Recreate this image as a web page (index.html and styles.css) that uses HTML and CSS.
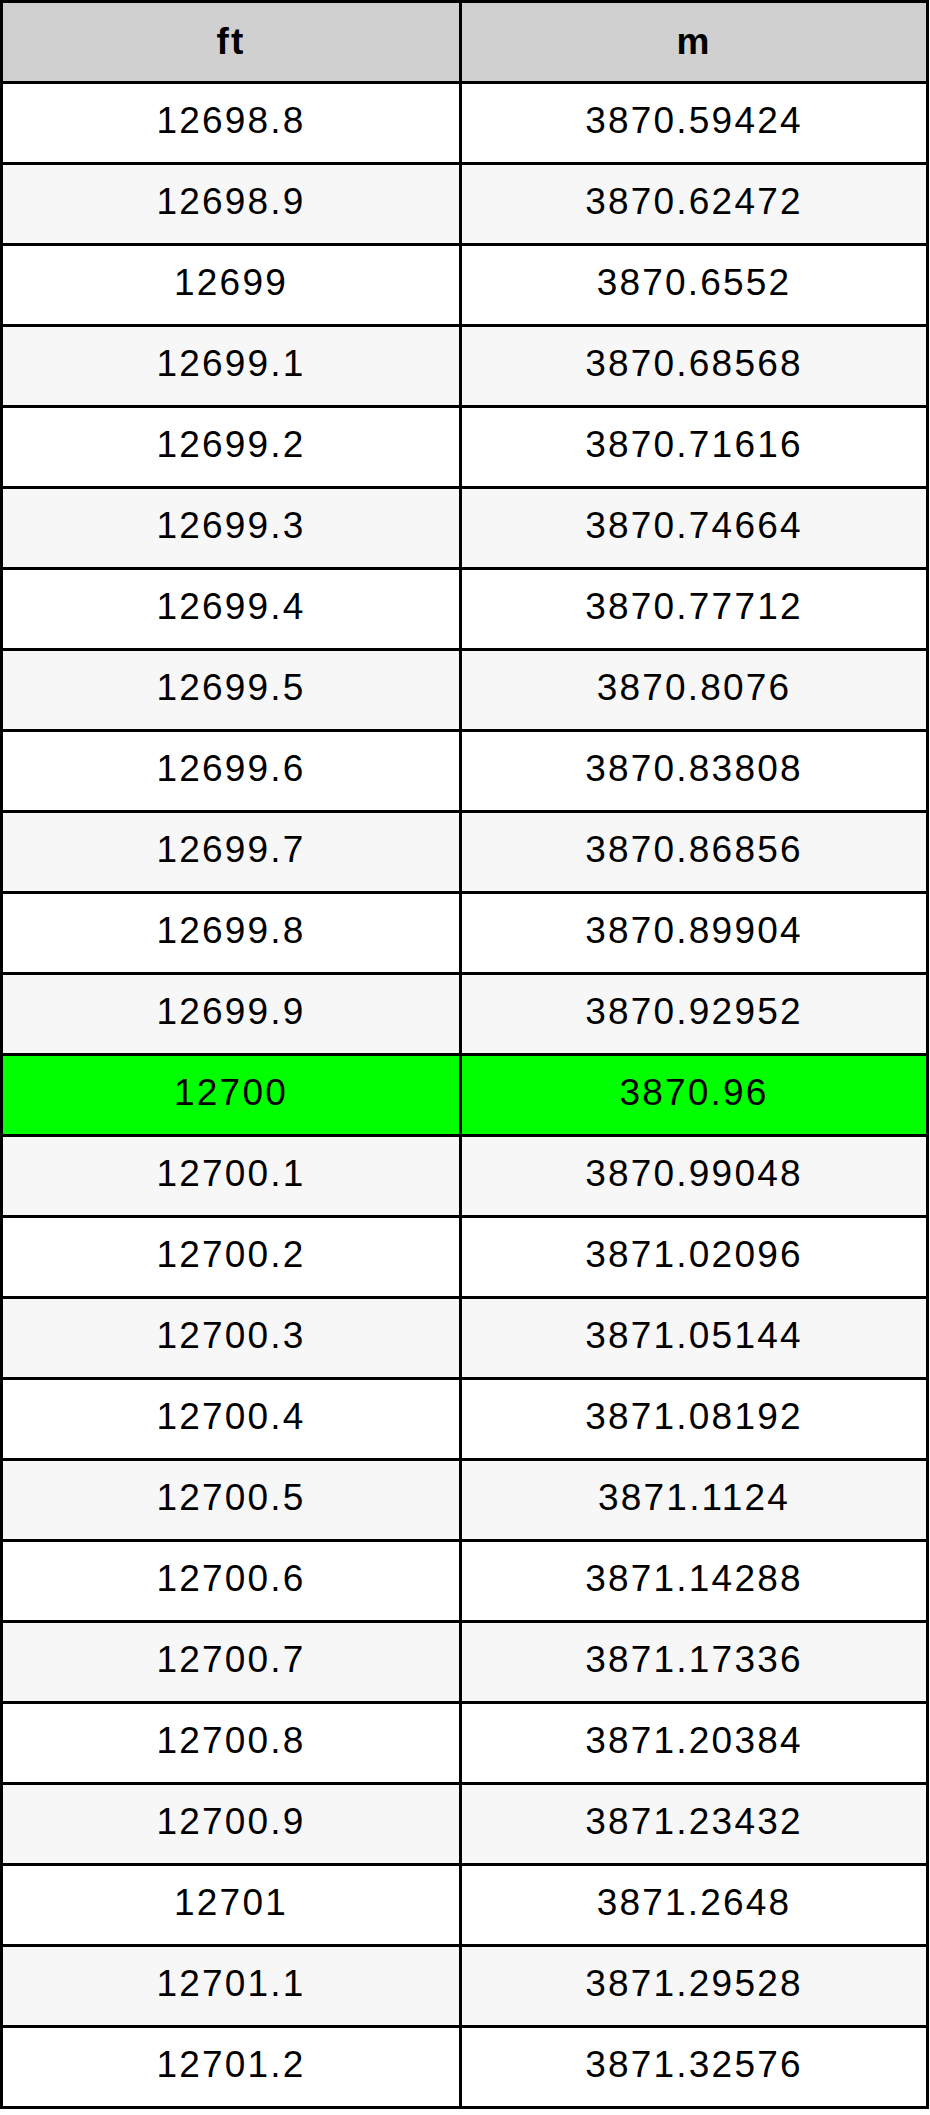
FILE: index.html
```html
<!DOCTYPE html>
<html>
<head>
<meta charset="utf-8">
<link rel="stylesheet" href="styles.css">
</head>
<body>
<table class="conv">
<thead>
<tr><th class="c1">ft</th><th class="c2">m</th></tr>
</thead>
<tbody>
<tr><td>12698.8</td><td>3870.59424</td></tr>
<tr class="alt"><td>12698.9</td><td>3870.62472</td></tr>
<tr><td>12699</td><td>3870.6552</td></tr>
<tr class="alt"><td>12699.1</td><td>3870.68568</td></tr>
<tr><td>12699.2</td><td>3870.71616</td></tr>
<tr class="alt"><td>12699.3</td><td>3870.74664</td></tr>
<tr><td>12699.4</td><td>3870.77712</td></tr>
<tr class="alt"><td>12699.5</td><td>3870.8076</td></tr>
<tr><td>12699.6</td><td>3870.83808</td></tr>
<tr class="alt"><td>12699.7</td><td>3870.86856</td></tr>
<tr><td>12699.8</td><td>3870.89904</td></tr>
<tr class="alt"><td>12699.9</td><td>3870.92952</td></tr>
<tr class="hl"><td>12700</td><td>3870.96</td></tr>
<tr class="alt"><td>12700.1</td><td>3870.99048</td></tr>
<tr><td>12700.2</td><td>3871.02096</td></tr>
<tr class="alt"><td>12700.3</td><td>3871.05144</td></tr>
<tr><td>12700.4</td><td>3871.08192</td></tr>
<tr class="alt"><td>12700.5</td><td>3871.1124</td></tr>
<tr><td>12700.6</td><td>3871.14288</td></tr>
<tr class="alt"><td>12700.7</td><td>3871.17336</td></tr>
<tr><td>12700.8</td><td>3871.20384</td></tr>
<tr class="alt"><td>12700.9</td><td>3871.23432</td></tr>
<tr><td>12701</td><td>3871.2648</td></tr>
<tr class="alt"><td>12701.1</td><td>3871.29528</td></tr>
<tr><td>12701.2</td><td>3871.32576</td></tr>
</tbody>
</table>
</body>
</html>
```
FILE: styles.css
```css
html, body {
  margin: 0;
  padding: 0;
  background: #ffffff;
}
.conv {
  border-collapse: separate;
  border-spacing: 0;
  border-top: 3px solid #000;
  border-left: 3px solid #000;
  font-family: "Liberation Sans", Arial, sans-serif;
  font-size: 37px;
  letter-spacing: 2.2px;
  color: #000;
  table-layout: fixed;
  width: 929px;
}
.conv th, .conv td {
  height: 81px;
  padding: 0 0 4px 0;
  box-sizing: border-box;
  border-right: 3px solid #000;
  border-bottom: 3px solid #000;
  text-align: center;
  vertical-align: middle;
  background: #ffffff;
}
.conv th {
  background: #d0d0d0;
  font-weight: bold;
  padding: 0;
}
.conv .c1 { width: 459px; }
.conv .c2 { width: 467px; }
.conv tr.alt td { background: #f7f7f7; }
.conv tr.hl td { background: #00ff00; }
```
